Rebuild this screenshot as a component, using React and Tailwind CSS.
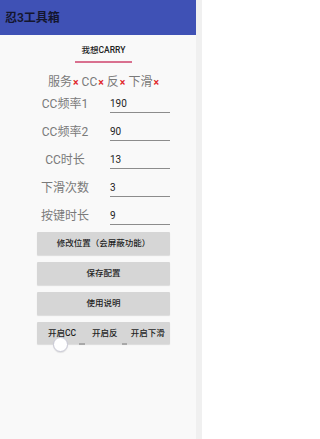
import React from "react";

const rows = [
  ["CC频率1", "190"],
  ["CC频率2", "90"],
  ["CC时长", "13"],
  ["下滑次数", "3"],
  ["按键时长", "9"],
];

function X() {
  return <span className="text-[#e0262b] text-[10.5px] font-bold ml-[1px]">×</span>;
}

function Btn({ children }) {
  return (
    <div className="w-[133px] h-[23px] bg-[#d6d6d6] rounded-[1px] shadow-[0_1px_1px_rgba(0,0,0,0.12)] flex items-center justify-center text-[8.5px] font-medium text-[#1f1f1f]">
      {children}
    </div>
  );
}

export default function App() {
  return (
    <div className="w-[202px] h-[439px] flex font-['Roboto','Noto_Sans_CJK_SC',sans-serif] overflow-hidden">
      <div className="w-[196px] h-full bg-[#f9f9f9] flex flex-col">
        <div className="h-[35px] bg-[#3f51b5] flex items-center pl-[5px] text-[12px] font-semibold text-[#14162e]">
          忍3工具箱
        </div>
        <div className="ml-[75px] w-[57px] h-[28px] flex flex-col items-center">
          <div className="mt-[9px] text-[8.5px] leading-[12px] font-medium text-[#222]">我想CARRY</div>
          <div className="mt-auto h-[2px] w-full bg-[#d9708f]"></div>
        </div>
        <div className="mt-[11px] pl-[48px] h-[16px] flex items-center text-[12px] leading-[16px] text-[#7a7a7a] whitespace-nowrap gap-[3px]">
          <span>服务<X /></span>
          <span>CC<X /></span>
          <span>反<X /></span>
          <span>下滑<X /></span>
        </div>
        <div className="flex flex-col">
          {rows.map(([label, value]) => (
            <div key={label} className="h-[28px] flex items-start">
              <div className="ml-[30px] w-[70px] text-center text-[12px] leading-[28px] text-[#7a7a7a]">{label}</div>
              <div className="ml-[10px] w-[60px] mt-[6px] h-[17px] border-b border-[#8c8c8c] text-[10px] leading-[16px] text-[#1e1e1e]">
                {value}
              </div>
            </div>
          ))}
        </div>
        <div className="mt-[2px] ml-[37px] flex flex-col gap-[7px]">
          <Btn>修改位置（会屏蔽功能）</Btn>
          <Btn>保存配置</Btn>
          <Btn>使用说明</Btn>
          <div className="relative w-[133px] h-[22px]">
            <div className="w-full h-full bg-[#d6d6d6] rounded-[1px] shadow-[0_1px_1px_rgba(0,0,0,0.12)] flex items-center text-[8.5px] font-medium text-[#1f1f1f] whitespace-nowrap">
              <span className="ml-[11px]">开启CC</span>
              <span className="ml-[16px]">开启反</span>
              <span className="ml-[13px]">开启下滑</span>
            </div>
            <div className="absolute left-[42px] top-[21px] w-[6px] h-[2px] bg-[#a8a8a8]"></div>
            <div className="absolute left-[85px] top-[21px] w-[5px] h-[2px] bg-[#a8a8a8]"></div>
            <div className="absolute left-[16px] top-[15px] w-[15px] h-[15px] rounded-full bg-white border border-[#c9c9d6] shadow-[0_1px_1px_rgba(0,0,0,0.1)]"></div>
          </div>
        </div>
      </div>
      <div className="flex-1 h-full bg-[#f0f0f0]"></div>
    </div>
  );
}
